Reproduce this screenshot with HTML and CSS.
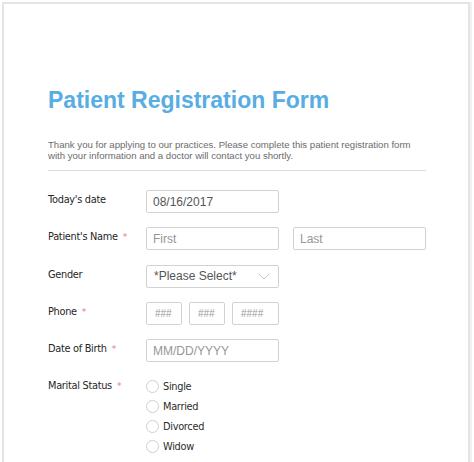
FILE: index.html
```html
<!DOCTYPE html>
<html lang="en">
<head>
<meta charset="utf-8">
<title>Patient Registration Form</title>
<link rel="stylesheet" href="styles.css">
</head>
<body>
<div class="frame">
  <h1 class="title">Patient Registration Form</h1>
  <p class="desc">Thank you for applying to our practices. Please complete this patient registration form with your information and a doctor will contact you shortly.</p>
  <div class="rule"></div>

  <div class="row">
    <div class="label">Today's date</div>
    <div class="field">
      <input class="input w-full" type="text" value="08/16/2017">
    </div>
  </div>

  <div class="row">
    <div class="label">Patient's Name<span class="req">*</span></div>
    <div class="field name">
      <input class="input w-full" type="text" placeholder="First">
      <input class="input w-full" type="text" placeholder="Last">
    </div>
  </div>

  <div class="row">
    <div class="label">Gender</div>
    <div class="field">
      <div class="select">
        <span>*Please Select*</span>
        <svg class="chev" width="12" height="7" viewBox="0 0 12 7"><path d="M0.5 0.8 L6 6 L11.5 0.8" fill="none" stroke="#c4c4c4" stroke-width="1"/></svg>
      </div>
    </div>
  </div>

  <div class="row">
    <div class="label">Phone<span class="req">*</span></div>
    <div class="field phone">
      <input class="input small p3" type="text" placeholder="###">
      <input class="input small p3" type="text" placeholder="###">
      <input class="input small p4" type="text" placeholder="####">
    </div>
  </div>

  <div class="row">
    <div class="label">Date of Birth<span class="req">*</span></div>
    <div class="field">
      <input class="input w-full" type="text" placeholder="MM/DD/YYYY">
    </div>
  </div>

  <div class="row radios-row">
    <div class="label">Marital Status<span class="req">*</span></div>
    <div class="options">
      <div class="option"><span class="radio"></span><span>Single</span></div>
      <div class="option"><span class="radio"></span><span>Married</span></div>
      <div class="option"><span class="radio"></span><span>Divorced</span></div>
      <div class="option"><span class="radio"></span><span>Widow</span></div>
    </div>
  </div>
</div>
</body>
</html>
```

FILE: styles.css
```css
html, body {
  margin: 0;
  padding: 0;
  background: #ffffff;
  overflow: hidden;
}

.frame {
  margin: 2px 0 0 2px;
  width: 468px;
  height: 480px;
  box-sizing: border-box;
  border: 2px solid #e4e4e4;
  border-bottom: none;
  box-shadow: 2px 0 0 #f1f1f1;
  padding: 82px 42px 0 44px;
  font-family: "Liberation Sans", Arial, sans-serif;
}

.title {
  margin: 0;
  font-size: 23px;
  line-height: 28px;
  font-weight: bold;
  color: #58ade2;
}

.desc {
  margin: 25px 0 0 0;
  font-size: 9.6px;
  line-height: 11px;
  color: #6c6c6c;
}

.rule {
  margin-top: 9px;
  height: 1px;
  background: #dcdcdc;
}

.row {
  display: grid;
  grid-template-columns: 98px 1fr;
  height: 23px;
  margin-bottom: 14.25px;
}

.rule + .row {
  margin-top: 19px;
}

.label {
  padding-top: 4px;
  font-family: "DejaVu Sans", Verdana, sans-serif;
  font-size: 9.8px;
  letter-spacing: -0.3px;
  line-height: 12px;
  color: #262626;
}

.req {
  color: #e8797a;
  font-size: 9px;
  margin-left: 5px;
  letter-spacing: 0;
}

.field {
  display: flex;
  gap: 14px;
}

.input {
  box-sizing: border-box;
  height: 23px;
  margin: 0;
  border: 1px solid #d2d2d2;
  border-radius: 2px;
  padding: 0 6px;
  font-family: "Liberation Sans", Arial, sans-serif;
  font-size: 12px;
  color: #555555;
  background: #ffffff;
  outline: none;
}

.input::placeholder {
  color: #969696;
  opacity: 1;
}

.w-full {
  width: 133px;
}

.phone {
  gap: 7px;
}

.small {
  font-size: 10px;
  padding: 0 0 0 8px;
}

.small::placeholder {
  color: #9a9a9a;
}

.p3 {
  width: 36px;
}

.p4 {
  width: 47px;
}

.select {
  box-sizing: border-box;
  width: 133px;
  height: 23px;
  border: 1px solid #d2d2d2;
  border-radius: 2px;
  padding: 0 8px 0 7px;
  display: flex;
  align-items: center;
  justify-content: space-between;
  font-size: 12px;
  color: #555555;
}

.chev {
  display: block;
  margin-top: 1px;
}

.radios-row {
  height: auto;
}

.options {
  display: flex;
  flex-direction: column;
  margin-top: 0.5px;
}

.option {
  display: flex;
  align-items: center;
  gap: 4px;
  height: 20px;
  font-family: "DejaVu Sans", Verdana, sans-serif;
  font-size: 9.8px;
  letter-spacing: -0.3px;
  color: #2c2c2c;
}

.radio {
  box-sizing: border-box;
  width: 13px;
  height: 13px;
  border: 1px solid #cfcfcf;
  border-radius: 50%;
  background: #ffffff;
}
```
